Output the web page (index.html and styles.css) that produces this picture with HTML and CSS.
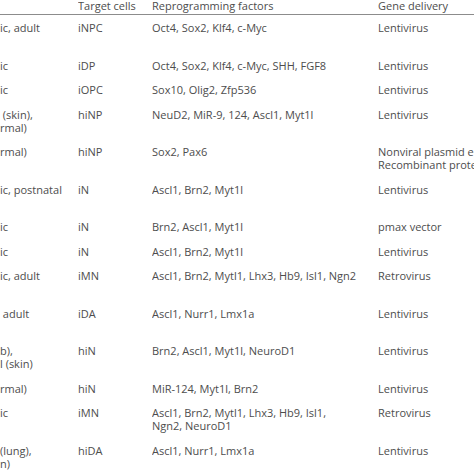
FILE: index.html
```html
<!DOCTYPE html>
<html>
<head>
<meta charset="utf-8">
<link rel="stylesheet" href="styles.css">
</head>
<body>
<div class="page">
<table class="tbl">
<colgroup><col class="c1"><col class="c2"><col class="c3"><col class="c4"></colgroup>
<thead>
<tr><th></th><th>Target cells</th><th>Reprogramming factors</th><th>Gene delivery</th></tr>
</thead>
<tbody>
<tr><td>ic, adult<br>&nbsp;</td><td>iNPC</td><td>Oct4, Sox2, Klf4, c-Myc</td><td>Lentivirus</td></tr>
<tr><td>ic</td><td>iDP</td><td>Oct4, Sox2, Klf4, c-Myc, SHH, FGF8</td><td>Lentivirus</td></tr>
<tr><td>ic</td><td>iOPC</td><td>Sox10, Olig2, Zfp536</td><td>Lentivirus</td></tr>
<tr><td>&nbsp;(skin),<br>rmal)</td><td>hiNP</td><td>NeuD2, MiR-9, 124, Ascl1, Myt1l</td><td>Lentivirus</td></tr>
<tr><td>rmal)</td><td>hiNP</td><td>Sox2, Pax6</td><td>Nonviral plasmid electroporation<br>Recombinant protein</td></tr>
<tr><td>ic, postnatal<br>&nbsp;</td><td>iN</td><td>Ascl1, Brn2, Myt1l</td><td>Lentivirus</td></tr>
<tr><td>ic</td><td>iN</td><td>Brn2, Ascl1, Myt1l</td><td>pmax vector</td></tr>
<tr><td>ic</td><td>iN</td><td>Ascl1, Brn2, Myt1l</td><td>Lentivirus</td></tr>
<tr><td>ic, adult<br>&nbsp;</td><td>iMN</td><td>Ascl1, Brn2, Mytl1, Lhx3, Hb9, Isl1, Ngn2</td><td>Retrovirus</td></tr>
<tr><td>&nbsp;adult<br>&nbsp;</td><td>iDA</td><td>Ascl1, Nurr1, Lmx1a</td><td>Lentivirus</td></tr>
<tr><td>b),<br>l (skin)</td><td>hiN</td><td>Brn2, Ascl1, Myt1l, NeuroD1</td><td>Lentivirus</td></tr>
<tr><td>rmal)</td><td>hiN</td><td>MiR-124, Myt1l, Brn2</td><td>Lentivirus</td></tr>
<tr><td>ic</td><td>iMN</td><td>Ascl1, Brn2, Mytl1, Lhx3, Hb9, Isl1,<br>Ngn2, NeuroD1</td><td>Retrovirus</td></tr>
<tr><td>(lung),<br>n)</td><td>hiDA</td><td>Ascl1, Nurr1, Lmx1a</td><td>Lentivirus</td></tr>
</tbody>
</table>
</div>
</body>
</html>
```
FILE: styles.css
```css
html, body {
  margin: 0;
  padding: 0;
  background: #ffffff;
}

.page {
  width: 474px;
  height: 474px;
  overflow: hidden;
}

.tbl {
  border-collapse: collapse;
  table-layout: fixed;
  width: 580px;
  margin-top: -1px;
  font-family: "Open Sans", "Noto Sans", sans-serif;
  font-size: 11px;
  line-height: 13px;
  color: #4d4d4d;
}

.c1 { width: 78px; }
.c2 { width: 74px; }
.c3 { width: 226px; }
.c4 { width: 202px; }

.tbl th,
.tbl td {
  padding: 6px 0 5.5px 0;
  text-align: left;
  vertical-align: top;
  font-weight: normal;
  white-space: nowrap;
  overflow: hidden;
}

.tbl thead th {
  padding: 0 0 2px 0;
  border-bottom: 1px solid #8c8c8c;
}
```
